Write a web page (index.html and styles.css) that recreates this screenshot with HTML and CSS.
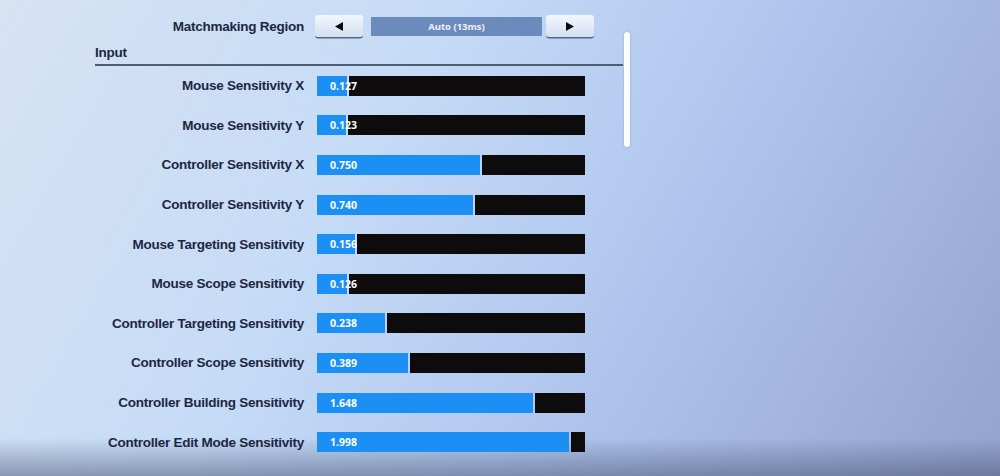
FILE: index.html
```html
<!DOCTYPE html>
<html>
<head>
<meta charset="utf-8">
<link rel="stylesheet" href="styles.css">
</head>
<body>
<div class="screen">
  <div class="panel">
    <div class="region-row">
      <div class="label">Matchmaking Region</div>
      <div class="picker">
        <div class="btn"><svg width="8" height="9" viewBox="0 0 8 9"><polygon points="8,0 8,9 0,4.5" fill="#0c0c10"/></svg></div>
        <div class="field">Auto (13ms)</div>
        <div class="btn"><svg width="8" height="9" viewBox="0 0 8 9"><polygon points="0,0 0,9 8,4.5" fill="#0c0c10"/></svg></div>
      </div>
    </div>
    <div class="section">Input</div>
    <div class="rows">
      <div class="row"><div class="label">Mouse Sensitivity X</div><div class="bar"><div class="fill" style="width:30px">0.127</div><div class="rest"></div></div></div>
      <div class="row"><div class="label">Mouse Sensitivity Y</div><div class="bar"><div class="fill" style="width:29px">0.123</div><div class="rest"></div></div></div>
      <div class="row"><div class="label">Controller Sensitivity X</div><div class="bar"><div class="fill" style="width:163px">0.750</div><div class="rest"></div></div></div>
      <div class="row"><div class="label">Controller Sensitivity Y</div><div class="bar"><div class="fill" style="width:156px">0.740</div><div class="rest"></div></div></div>
      <div class="row"><div class="label">Mouse Targeting Sensitivity</div><div class="bar"><div class="fill" style="width:38px">0.156</div><div class="rest"></div></div></div>
      <div class="row"><div class="label">Mouse Scope Sensitivity</div><div class="bar"><div class="fill" style="width:30px">0.126</div><div class="rest"></div></div></div>
      <div class="row"><div class="label">Controller Targeting Sensitivity</div><div class="bar"><div class="fill" style="width:68px">0.238</div><div class="rest"></div></div></div>
      <div class="row"><div class="label">Controller Scope Sensitivity</div><div class="bar"><div class="fill" style="width:91px">0.389</div><div class="rest"></div></div></div>
      <div class="row"><div class="label">Controller Building Sensitivity</div><div class="bar"><div class="fill" style="width:216px">1.648</div><div class="rest"></div></div></div>
      <div class="row"><div class="label">Controller Edit Mode Sensitivity</div><div class="bar"><div class="fill" style="width:252px">1.998</div><div class="rest"></div></div></div>
    </div>
  </div>
  <div class="scrollbar"></div>
</div>
</body>
</html>
```
FILE: styles.css
```css
html, body {
  margin: 0;
  padding: 0;
  width: 1000px;
  height: 476px;
  overflow: hidden;
}
body {
  background:
    linear-gradient(to bottom, rgba(70, 80, 110, 0) 0%, rgba(70, 80, 110, 0) 92%, rgba(70, 82, 112, 0.5) 100%),
    linear-gradient(120deg, #d6e3f3 0%, #c6dbf6 35%, #b2c8ef 60%, #9fb0dc 85%, #93a2cf 100%);
  font-family: "Liberation Sans", Arial, sans-serif;
  font-weight: 700;
  color: #1d2640;
}
.screen {
  display: flex;
  align-items: flex-start;
  padding-left: 95px;
  padding-top: 14px;
}
.panel {
  width: 528px;
  display: flex;
  flex-direction: column;
}
.label {
  width: 209px;
  text-align: right;
  font-size: 13.5px;
  letter-spacing: -0.25px;
  white-space: nowrap;
}
.region-row {
  display: flex;
  align-items: center;
  height: 24px;
}
.picker {
  display: flex;
  align-items: center;
  margin-left: 11px;
}
.btn {
  width: 48px;
  height: 22px;
  border-radius: 3px;
  background: linear-gradient(#f3f7fd, #d3dff0);
  box-shadow: 0 1.5px 0 #56657f;
  display: flex;
  align-items: center;
  justify-content: center;
}
.field {
  width: 171px;
  height: 19px;
  margin: 0 4px 0 8px;
  background: #6b8bbc;
  color: #eef3fb;
  font-family: "Open Sans", sans-serif;
  font-size: 9.5px;
  font-weight: 700;
  display: flex;
  align-items: center;
  justify-content: center;
}
.section {
  margin-top: 4px;
  height: 22px;
  line-height: 21px;
  font-size: 13.5px;
  letter-spacing: -0.25px;
  border-bottom: 2px solid #4f5d72;
}
.rows {
  display: flex;
  flex-direction: column;
}
.row {
  height: 39.6px;
  display: flex;
  align-items: center;
}
.bar {
  margin-left: 13px;
  width: 268px;
  height: 20px;
  display: flex;
  gap: 2px;
}
.fill {
  position: relative;
  z-index: 1;
  background: #1b8ff4;
  color: #ffffff;
  font-family: "Open Sans", sans-serif;
  font-size: 10.5px;
  font-weight: 700;
  line-height: 20px;
  padding-left: 13px;
  box-sizing: border-box;
  white-space: nowrap;
  overflow: visible;
}
.rest {
  flex: 1;
  background: #0e0b0c;
}
.scrollbar {
  width: 6px;
  height: 115px;
  margin-top: 18px;
  margin-left: 1px;
  background: #fbfdff;
  border-radius: 3px;
  box-shadow: 0 0 2px rgba(60, 80, 120, 0.4);
}
```
